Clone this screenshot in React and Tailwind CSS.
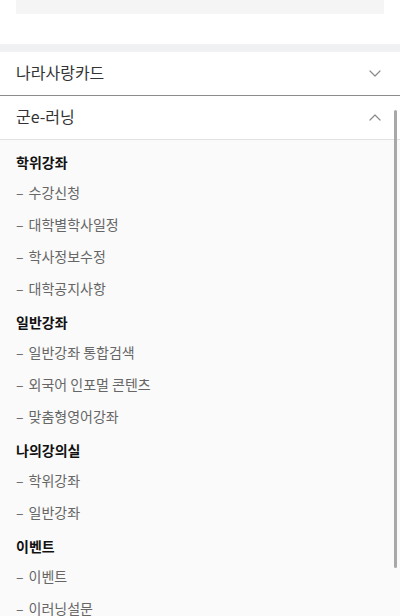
import React from "react";

const groups = [
    { title: "학위강좌", items: ["수강신청", "대학별학사일정", "학사정보수정", "대학공지사항"] },
    { title: "일반강좌", items: ["일반강좌 통합검색", "외국어 인포멀 콘텐츠", "맞춤형영어강좌"] },
    { title: "나의강의실", items: ["학위강좌", "일반강좌"] },
    { title: "이벤트", items: ["이벤트", "이러닝설문"] },
];

const Chevron = ({ up }) => (
    <svg width="12" height="7" viewBox="0 0 12 7" fill="none" className="text-[#8a8a8a]">
        <polyline
            points={up ? "1,6 6,1 11,6" : "1,1 6,6 11,1"}
            stroke="currentColor"
            strokeWidth="1.2"
            strokeLinecap="round"
            strokeLinejoin="round"
        />
    </svg>
);

const App = () => {
    return (
        <div className="relative w-[400px] h-[616px] overflow-hidden bg-white font-['Noto_Sans_CJK_KR','Noto_Sans',sans-serif]">
            {/* Select box cut at the top */}
            <div className="px-4 pb-[30px]">
                <div className="h-[14px] bg-[#f5f5f5]" />
            </div>

            <div className="h-2 bg-[#f0f1f3]" />

            {/* Accordion rows */}
            <div className="flex items-center justify-between h-[44px] pl-4 pr-[19px] border-b border-[#8c8c8c]">
                <span className="mb-[3px] text-[16px] text-[#333]">나라사랑카드</span>
                <Chevron />
            </div>
            <div className="flex items-center justify-between h-[44px] pl-4 pr-[19px] border-b border-[#e2e2e2]">
                <span className="mb-[3px] text-[16px] text-[#333]">군e-러닝</span>
                <Chevron up />
            </div>

            {/* Expanded content */}
            <div className="bg-[#fafafa] px-4 pt-2 pb-6">
                {groups.map((group) => (
                    <div key={group.title} className="pb-1">
                        <div className="h-[28px] flex items-center text-[14px] font-bold text-[#111]">
                            {group.title}
                        </div>
                        {group.items.map((item) => (
                            <div key={item} className="h-8 flex items-center text-[14px] text-[#666]">
                                <span className="mr-[5px]">–</span>
                                {item}
                            </div>
                        ))}
                    </div>
                ))}
            </div>

            {/* Scroll indicator */}
            <div className="absolute right-[3px] top-[110px] w-[3px] h-[458px] rounded-full bg-[#a8a8a8]" />
        </div>
    );
};

export default App;
